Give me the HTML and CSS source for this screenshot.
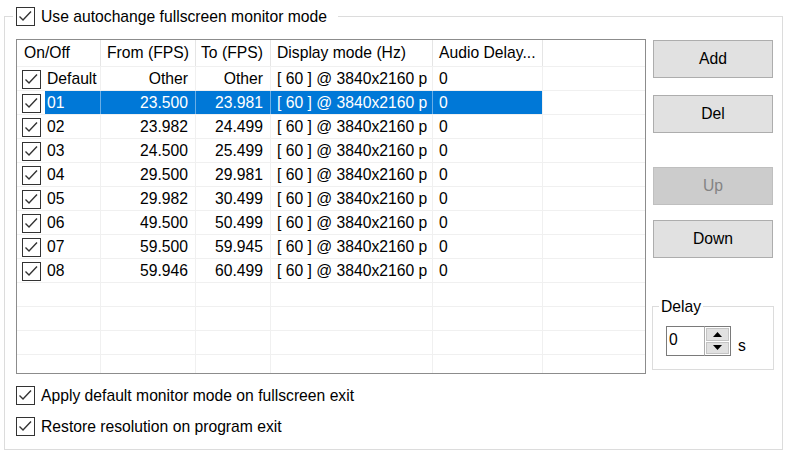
FILE: index.html
```html
<!DOCTYPE html>
<html>
<head>
<meta charset="utf-8">
<link rel="stylesheet" href="styles.css">
</head>
<body>
<fieldset class="group">
  <legend class="group-legend">
    <label class="chk">
      <span class="box"><svg viewBox="0 0 17 17" width="17" height="17"><polyline points="2.5,8.5 6,12 14,3.5" fill="none" stroke="#333" stroke-width="1.4"/></svg></span>
      <span class="chk-text">Use autochange fullscreen monitor mode</span>
    </label>
  </legend>
  <div class="main">
    <div class="list">
      <div class="lrow head">
        <div class="c c1">On/Off</div>
        <div class="c c2">From (FPS)</div>
        <div class="c c3">To (FPS)</div>
        <div class="c c4">Display mode (Hz)</div>
        <div class="c c5">Audio Delay...</div>
        <div class="c c6"></div>
      </div>
      <div class="lrow">
        <div class="c c1"><span class="box"><svg viewBox="0 0 17 17" width="17" height="17"><polyline points="2.5,8.5 6,12 14,3.5" fill="none" stroke="#333" stroke-width="1.4"/></svg></span><span class="name">Default</span></div>
        <div class="c c2 num">Other</div>
        <div class="c c3 num">Other</div>
        <div class="c c4">[ 60 ] @ 3840x2160 p</div>
        <div class="c c5">0</div>
        <div class="c c6"></div>
      </div>
      <div class="lrow sel">
        <div class="c c1"><span class="box"><svg viewBox="0 0 17 17" width="17" height="17"><polyline points="2.5,8.5 6,12 14,3.5" fill="none" stroke="#333" stroke-width="1.4"/></svg></span><span class="name">01</span></div>
        <div class="c c2 num">23.500</div>
        <div class="c c3 num">23.981</div>
        <div class="c c4">[ 60 ] @ 3840x2160 p</div>
        <div class="c c5">0</div>
        <div class="c c6"></div>
      </div>
      <div class="lrow">
        <div class="c c1"><span class="box"><svg viewBox="0 0 17 17" width="17" height="17"><polyline points="2.5,8.5 6,12 14,3.5" fill="none" stroke="#333" stroke-width="1.4"/></svg></span><span class="name">02</span></div>
        <div class="c c2 num">23.982</div>
        <div class="c c3 num">24.499</div>
        <div class="c c4">[ 60 ] @ 3840x2160 p</div>
        <div class="c c5">0</div>
        <div class="c c6"></div>
      </div>
      <div class="lrow">
        <div class="c c1"><span class="box"><svg viewBox="0 0 17 17" width="17" height="17"><polyline points="2.5,8.5 6,12 14,3.5" fill="none" stroke="#333" stroke-width="1.4"/></svg></span><span class="name">03</span></div>
        <div class="c c2 num">24.500</div>
        <div class="c c3 num">25.499</div>
        <div class="c c4">[ 60 ] @ 3840x2160 p</div>
        <div class="c c5">0</div>
        <div class="c c6"></div>
      </div>
      <div class="lrow">
        <div class="c c1"><span class="box"><svg viewBox="0 0 17 17" width="17" height="17"><polyline points="2.5,8.5 6,12 14,3.5" fill="none" stroke="#333" stroke-width="1.4"/></svg></span><span class="name">04</span></div>
        <div class="c c2 num">29.500</div>
        <div class="c c3 num">29.981</div>
        <div class="c c4">[ 60 ] @ 3840x2160 p</div>
        <div class="c c5">0</div>
        <div class="c c6"></div>
      </div>
      <div class="lrow">
        <div class="c c1"><span class="box"><svg viewBox="0 0 17 17" width="17" height="17"><polyline points="2.5,8.5 6,12 14,3.5" fill="none" stroke="#333" stroke-width="1.4"/></svg></span><span class="name">05</span></div>
        <div class="c c2 num">29.982</div>
        <div class="c c3 num">30.499</div>
        <div class="c c4">[ 60 ] @ 3840x2160 p</div>
        <div class="c c5">0</div>
        <div class="c c6"></div>
      </div>
      <div class="lrow">
        <div class="c c1"><span class="box"><svg viewBox="0 0 17 17" width="17" height="17"><polyline points="2.5,8.5 6,12 14,3.5" fill="none" stroke="#333" stroke-width="1.4"/></svg></span><span class="name">06</span></div>
        <div class="c c2 num">49.500</div>
        <div class="c c3 num">50.499</div>
        <div class="c c4">[ 60 ] @ 3840x2160 p</div>
        <div class="c c5">0</div>
        <div class="c c6"></div>
      </div>
      <div class="lrow">
        <div class="c c1"><span class="box"><svg viewBox="0 0 17 17" width="17" height="17"><polyline points="2.5,8.5 6,12 14,3.5" fill="none" stroke="#333" stroke-width="1.4"/></svg></span><span class="name">07</span></div>
        <div class="c c2 num">59.500</div>
        <div class="c c3 num">59.945</div>
        <div class="c c4">[ 60 ] @ 3840x2160 p</div>
        <div class="c c5">0</div>
        <div class="c c6"></div>
      </div>
      <div class="lrow">
        <div class="c c1"><span class="box"><svg viewBox="0 0 17 17" width="17" height="17"><polyline points="2.5,8.5 6,12 14,3.5" fill="none" stroke="#333" stroke-width="1.4"/></svg></span><span class="name">08</span></div>
        <div class="c c2 num">59.946</div>
        <div class="c c3 num">60.499</div>
        <div class="c c4">[ 60 ] @ 3840x2160 p</div>
        <div class="c c5">0</div>
        <div class="c c6"></div>
      </div>
      <div class="lrow empty"><div class="c c1"></div><div class="c c2"></div><div class="c c3"></div><div class="c c4"></div><div class="c c5"></div><div class="c c6"></div></div>
      <div class="lrow empty"><div class="c c1"></div><div class="c c2"></div><div class="c c3"></div><div class="c c4"></div><div class="c c5"></div><div class="c c6"></div></div>
      <div class="lrow empty"><div class="c c1"></div><div class="c c2"></div><div class="c c3"></div><div class="c c4"></div><div class="c c5"></div><div class="c c6"></div></div>
      <div class="lrow filler"><div class="c c1"></div><div class="c c2"></div><div class="c c3"></div><div class="c c4"></div><div class="c c5"></div><div class="c c6"></div></div>
    </div>
    <div class="side">
      <button class="btn btn-add">Add</button>
      <button class="btn btn-del">Del</button>
      <button class="btn btn-up" disabled>Up</button>
      <button class="btn btn-down">Down</button>
      <fieldset class="delay">
        <legend class="delay-legend">Delay</legend>
        <div class="spinrow">
          <div class="spin-input">0</div>
          <div class="spin-btns">
            <span class="spin-b"><svg viewBox="0 0 9 5" width="9" height="5"><polygon points="0,5 4.5,0 9,5" fill="#000"/></svg></span>
            <span class="spin-b"><svg viewBox="0 0 9 5" width="9" height="5"><polygon points="0,0 9,0 4.5,5" fill="#000"/></svg></span>
          </div>
          <span class="unit">s</span>
        </div>
      </fieldset>
    </div>
  </div>
  <label class="chk opt opt1">
    <span class="box"><svg viewBox="0 0 17 17" width="17" height="17"><polyline points="2.5,8.5 6,12 14,3.5" fill="none" stroke="#333" stroke-width="1.4"/></svg></span>
    <span class="chk-text">Apply default monitor mode on fullscreen exit</span>
  </label>
  <label class="chk opt opt2">
    <span class="box"><svg viewBox="0 0 17 17" width="17" height="17"><polyline points="2.5,8.5 6,12 14,3.5" fill="none" stroke="#333" stroke-width="1.4"/></svg></span>
    <span class="chk-text">Restore resolution on program exit</span>
  </label>
</fieldset>
</body>
</html>
```

FILE: styles.css
```css
html, body {
  margin: 0;
  padding: 0;
  background: #ffffff;
}
body {
  font-family: "Liberation Sans", Arial, sans-serif;
  font-size: 15.7px;
  color: #000;
  width: 792px;
  height: 455px;
  overflow: hidden;
}
.group {
  box-sizing: border-box;
  margin: 7px 0 0 4px;
  width: 779px;
  height: 443px;
  border: 1px solid #dcdcdc;
  padding: 0 9px 0 11px;
  min-width: 0;
}
.group-legend {
  padding: 0 11px 0 3px;
  margin-left: -3px;
  line-height: 19px;
}
.chk {
  display: flex;
  align-items: center;
  height: 19px;
}
.box {
  box-sizing: border-box;
  width: 19px;
  height: 19px;
  border: 1px solid #333;
  background: #fff;
  display: flex;
  flex: none;
}
.box svg { display: block; }
.chk-text {
  margin-left: 6px;
  line-height: 19px;
  white-space: nowrap;
}
.main {
  display: flex;
  gap: 7px;
  margin-top: 13px;
}
.list {
  box-sizing: border-box;
  width: 630px;
  height: 335px;
  border: 1px solid #8c8c8c;
  display: flex;
  flex-direction: column;
  overflow: hidden;
  background: #fff;
}
.lrow {
  display: flex;
  height: 23px;
  border-bottom: 1px solid #f0f0f0;
  flex: none;
}
.lrow.head {
  height: 26px;
}
.lrow.filler {
  flex: 1;
  border-bottom: none;
}
.c {
  box-sizing: border-box;
  border-right: 1px solid #f0f0f0;
  display: flex;
  align-items: center;
  padding-left: 6px;
  white-space: nowrap;
  flex: none;
}
.lrow:not(.head) .c { padding-top: 1px; }
.head .c { border-right-color: #e5e5e5; }
.c1 { width: 84px; padding-left: 5px; }
.head .c1 { padding-left: 7px; }
.c2 { width: 95px; }
.c3 { width: 75px; padding-left: 5px; }
.c4 { width: 162px; }
.c5 { width: 110px; }
.c6 { flex: 1; border-right: none; }
.num {
  justify-content: flex-end;
  padding-right: 7px;
}
.name {
  margin-left: 4px;
  padding-left: 2px;
  align-self: stretch;
  display: flex;
  align-items: center;
  flex: 1;
  margin-top: -1px;
  padding-top: 1px;
}
.sel .name,
.sel .c2,
.sel .c3,
.sel .c4,
.sel .c5 {
  background: #0078d7;
  color: #fff;
}
.sel .c1,
.sel .c2,
.sel .c3,
.sel .c4 {
  border-right-color: #6aaee6;
}
.side {
  width: 120px;
  display: flex;
  flex-direction: column;
}
.btn {
  box-sizing: border-box;
  width: 120px;
  height: 38px;
  border: 1px solid #adadad;
  background: #e1e1e1;
  font-family: "Liberation Sans", Arial, sans-serif;
  font-size: 15.7px;
  color: #000;
  padding: 0;
  flex: none;
}
.btn-add { margin-top: 1px; }
.btn-del { margin-top: 17px; }
.btn-up {
  margin-top: 34px;
  background: #cccccc;
  border-color: #bfbfbf;
  color: #838383;
}
.btn-down { margin-top: 15px; }
.delay {
  box-sizing: border-box;
  margin: 39px 0 0 -1px;
  width: 122px;
  height: 73px;
  border: 1px solid #dcdcdc;
  padding: 0 6px;
  min-width: 0;
}
.delay-legend {
  padding: 0 2px;
  line-height: 19px;
}
.spinrow {
  display: flex;
  align-items: flex-start;
  margin: 10px 0 0 7px;
}
.spin-input {
  box-sizing: border-box;
  width: 38px;
  height: 30px;
  border: 1px solid #7a7a7a;
  border-right: none;
  padding: 2px 0 0 2px;
  line-height: 22px;
  background: #fff;
}
.spin-btns {
  box-sizing: border-box;
  width: 27px;
  height: 30px;
  border: 1px solid #7a7a7a;
  border-left: 1px solid #adadad;
  display: flex;
  flex-direction: column;
  background: #fff;
  padding: 1px;
  gap: 1px;
}
.spin-b {
  flex: 1;
  background: #e1e1e1;
  border: 1px solid #c4c4c4;
  display: flex;
  align-items: center;
  justify-content: center;
}
.spin-b svg { display: block; }
.unit {
  margin: 10px 0 0 7px;
  line-height: 19px;
}
.opt1 { margin-top: 12px; }
.opt2 { margin-top: 12px; }
```
